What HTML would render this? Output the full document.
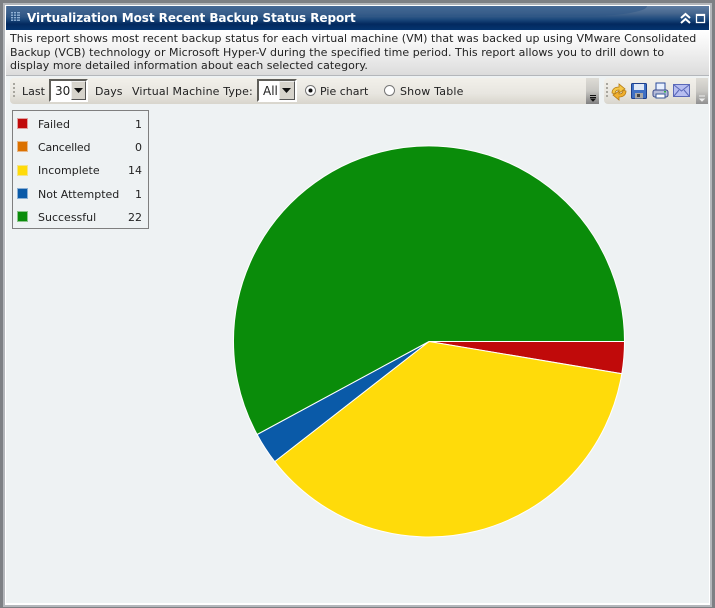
<!DOCTYPE html>
<html><head><meta charset="utf-8"><style>
html,body{margin:0;padding:0}
body{width:715px;height:608px;position:relative;overflow:hidden;background:#7d8084;font-family:"DejaVu Sans",sans-serif;font-size:11px;color:#222}
div,span,svg{position:absolute;box-sizing:border-box}
.t{white-space:nowrap;line-height:13px}
</style></head><body>
<div style="left:3px;top:3px;width:709px;height:604px;background:#b4b7bb"></div>
<div style="left:5px;top:5px;width:705px;height:600px;background:#fff"></div>
<div style="left:6px;top:6px;width:703px;height:597px;background:#eef2f3"></div>
<div style="left:6px;top:6px;width:703px;height:24px;background:linear-gradient(#5f7da3 0,#47688f 30%,#1d4a7d 55%,#03295f 75%,#04346f 100%)"></div>
<div style="left:7px;top:6px;width:640px;height:10px;background:#2a5485;opacity:.5;border-bottom-right-radius:60px 10px"></div>
<svg style="left:11px;top:12px" width="10" height="11"><g fill="#8fb0d4"><rect y="0" width="9" height="1.4"/><rect y="2.500" width="9" height="1.4"/><rect y="5" width="9" height="1.4"/><rect y="7.500" width="9" height="1.4"/></g><g fill="#1d4a7d"><rect x="2" width=".8" height="9"/><rect x="5" width=".8" height="9"/></g></svg>
<span class="t" style="left:27px;top:11px;font:bold 12px/15px 'DejaVu Sans',sans-serif;color:#fff;letter-spacing:-.06px">Virtualization Most Recent Backup Status Report</span>
<svg style="left:679px;top:12px" width="28" height="13"><path d="M2 6l4.500-4 4.500 4M2 11l4.500-4 4.500 4" fill="none" stroke="#fff" stroke-width="2"/><rect x="17.500" y="2.500" width="8" height="8" fill="none" stroke="#fff" stroke-width="1.300"/><rect x="17.500" y="2" width="8" height="2" fill="#fff"/></svg>
<div style="left:6px;top:30px;width:703px;height:46px;background:linear-gradient(#fff,#f6f6f6 30%,#dcdcdc 100%);border-bottom:1px solid #b4b7bb"></div>
<span class="t" style="left:10px;top:32px;letter-spacing:.04px">This report shows most recent backup status for each virtual machine (VM) that was backed up using VMware Consolidated</span>
<span class="t" style="left:10px;top:46px;letter-spacing:.04px">Backup (VCB) technology or Microsoft Hyper-V during the specified time period. This report allows you to drill down to</span>
<span class="t" style="left:10px;top:59px;letter-spacing:.04px">display more detailed information about each selected category.</span>
<div style="left:6px;top:76px;width:703px;height:28px;background:#eef2f3"></div>
<div style="left:10px;top:78px;width:589px;height:26px;background:linear-gradient(#f2f0ea,#e8e6e0 60%,#d8d5cc);border-radius:4px 0 0 4px"></div>
<div style="left:586px;top:78px;width:13px;height:26px;background:linear-gradient(#dedcd6,#c8c7c3 50%,#808080)"></div>
<svg style="left:589px;top:94px" width="9" height="8"><path d="M1 1.500h6M1 3.500h6M2 5h4l-2 2z" stroke="#111" fill="#111" stroke-width="1"/></svg>
<div style="left:604px;top:78px;width:104px;height:26px;background:linear-gradient(#f2f0ea,#e8e6e0 60%,#d8d5cc);border-radius:4px 0 0 4px"></div>
<div style="left:696px;top:78px;width:12px;height:26px;background:linear-gradient(#dedcd6,#c8c7c3 50%,#909090)"></div>
<svg style="left:698px;top:94px" width="9" height="8"><path d="M1 2h6M2 5h4l-2 2z" stroke="#eee" fill="#eee"/></svg>
<svg style="left:13px;top:82px" width="4" height="18"><g fill="#a8a69e"><rect y="1" width="2" height="2"/><rect y="5" width="2" height="2"/><rect y="9" width="2" height="2"/><rect y="13" width="2" height="2"/></g></svg>
<svg style="left:606px;top:82px" width="4" height="18"><g fill="#a8a69e"><rect y="1" width="2" height="2"/><rect y="5" width="2" height="2"/><rect y="9" width="2" height="2"/><rect y="13" width="2" height="2"/></g></svg>
<span class="t" style="left:22px;top:85px">Last</span>
<div style="left:49px;top:79px;width:39px;height:23px;background:#fff;border:2px solid;border-color:#5f5e59 #fff #fff #5f5e59"></div>
<span class="t" style="left:55px;top:85px;font-size:12px">30</span>
<div style="left:71px;top:81px;width:15px;height:19px;background:#d6d3cb;border:1px solid;border-color:#eee #555 #555 #eee"></div>
<svg style="left:74px;top:88px" width="9" height="5"><path d="M0 0h9l-4.500 5z" fill="#111"/></svg>
<span class="t" style="left:95px;top:85px">Days</span>
<span class="t" style="left:132px;top:85px;letter-spacing:.14px">Virtual Machine Type:</span>
<div style="left:257px;top:79px;width:40px;height:23px;background:#fff;border:2px solid;border-color:#5f5e59 #fff #fff #5f5e59"></div>
<span class="t" style="left:263px;top:85px;font-size:12px">All</span>
<div style="left:279px;top:81px;width:16px;height:19px;background:#d6d3cb;border:1px solid;border-color:#eee #555 #555 #eee"></div>
<svg style="left:282px;top:88px" width="9" height="5"><path d="M0 0h9l-4.500 5z" fill="#111"/></svg>
<svg style="left:304px;top:84px" width="13" height="13"><circle cx="6.500" cy="6.500" r="5" fill="#fff" stroke="#777"/><circle cx="6.500" cy="6.500" r="2" fill="#111"/></svg>
<span class="t" style="left:320px;top:85px">Pie chart</span>
<svg style="left:383px;top:84px" width="13" height="13"><circle cx="6.500" cy="6.500" r="5" fill="#fff" stroke="#777"/></svg>
<span class="t" style="left:400px;top:85px;letter-spacing:.2px">Show Table</span>
<svg style="left:610px;top:83px" width="18" height="18"><path d="M2 10C2 6 5 4 9 4V1l6 5-6 4V7C7 7 5 8 5 11z" fill="#f4c648" stroke="#b47a10" stroke-width=".8"/><path d="M16 8c0 4-3 6-7 6v3l-6-5 6-4v3c2 0 4-1 4-4z" fill="#f0b030" stroke="#b47a10" stroke-width=".8"/></svg>
<svg style="left:631px;top:83px" width="17" height="17"><rect x=".5" y=".5" width="15" height="15" rx="1" fill="#3f70c4" stroke="#1c3f8c"/><rect x="3" y="1" width="10" height="6" fill="#dfe8f6"/><rect x="4" y="10" width="8" height="5.500" fill="#a8a8a8"/><rect x="6" y="11" width="3" height="3" fill="#444"/></svg>
<svg style="left:652px;top:82px" width="17" height="18"><rect x="4" y="1" width="9" height="8" fill="#e8f0ff" stroke="#2a4a9a"/><rect x="1" y="8" width="15" height="7" rx="2" fill="#b6bcd8" stroke="#3a4a8a"/><rect x="12" y="9" width="2" height="1.500" fill="#2fb04a"/><rect x="4" y="12" width="9" height="4" fill="#fff" stroke="#3a5a9a"/></svg>
<svg style="left:673px;top:84px" width="17" height="14"><rect x=".5" y=".5" width="16" height="12" fill="#b6bdf0" stroke="#5a68b8"/><path d="M1 1l7.500 6L16 1M1 12l5-6M16 12l-5-6" fill="none" stroke="#5a68b8"/></svg>
<div style="left:12px;top:110px;width:137px;height:119px;border:1px solid #7f7f7f;background:#eef2f3"></div>
<div style="left:17px;top:118px;width:11px;height:11px;background:#c00a0a;border:1px solid #e0a0a0"></div>
<div style="left:17px;top:141px;width:11px;height:11px;background:#db7100;border:1px solid #e8b888"></div>
<div style="left:17px;top:165px;width:11px;height:11px;background:#ffdb0a;border:1px solid #f2e48a"></div>
<div style="left:17px;top:188px;width:11px;height:11px;background:#0a5aa8;border:1px solid #8cb0d4"></div>
<div style="left:17px;top:211px;width:11px;height:11px;background:#0a8c0a;border:1px solid #8cc48c"></div>
<span class="t" style="left:38px;top:118px">Failed</span><span class="t" style="right:573px;top:118px">1</span>
<span class="t" style="left:38px;top:141px;letter-spacing:-.2px">Cancelled</span><span class="t" style="right:573px;top:141px">0</span>
<span class="t" style="left:38px;top:164px">Incomplete</span><span class="t" style="right:573px;top:164px">14</span>
<span class="t" style="left:38px;top:188px">Not Attempted</span><span class="t" style="right:573px;top:188px">1</span>
<span class="t" style="left:38px;top:211px">Successful</span><span class="t" style="right:573px;top:211px">22</span>
<svg style="left:0;top:0" width="715" height="608"><g stroke="#fff" stroke-width="1">
<path d="M429 341.500L624.500 341.500A195.500 195.500 0 0 1 621.800 373.700Z" fill="#c00a0a"/>
<path d="M429 341.500L621.800 373.700A195.500 195.500 0 0 1 274.700 461.600Z" fill="#ffdb0a"/>
<path d="M429 341.500L274.700 461.600A195.500 195.500 0 0 1 257.100 434.500Z" fill="#0a5aa8"/>
<path d="M429 341.500L257.100 434.500A195.500 195.500 0 1 1 624.500 341.500Z" fill="#0a8c0a"/>
</g></svg>
</body></html>
